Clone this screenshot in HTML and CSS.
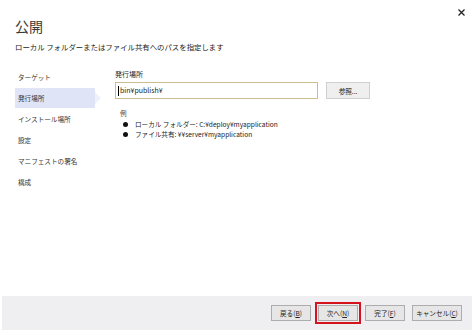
FILE: index.html
```html
<!DOCTYPE html>
<html lang="ja">
<head>
    <meta charset="UTF-8">
    <meta name="viewport" content="width=device-width, initial-scale=1.0">
    <title>公開</title>
    <link rel="stylesheet" href="styles.css">
</head>
<body>
    <div class="dialog">
        <span class="close">
            <svg width="7" height="7" viewBox="0 0 7 7"><path d="M0.5 0.5L6.5 6.5M6.5 0.5L0.5 6.5" stroke="#222" stroke-width="1.3"/></svg>
        </span>
        <div class="header">
            <h1 class="title">公開</h1>
            <p class="subtitle">ローカル フォルダーまたはファイル共有へのパスを指定します</p>
        </div>
        <div class="main">
            <ul class="nav">
                <li>ターゲット</li>
                <li class="active">発行場所</li>
                <li>インストール場所</li>
                <li>設定</li>
                <li>マニフェストの署名</li>
                <li>構成</li>
            </ul>
            <div class="content">
                <div class="label">発行場所</div>
                <div class="path-row">
                    <div class="path-input"><span class="caret"></span>bin¥publish¥</div>
                    <button class="btn browse">参照...</button>
                </div>
                <div class="examples">
                    <div class="ex-title">例</div>
                    <ul class="ex-list">
                        <li>ローカル フォルダー: C:¥deploy¥myapplication</li>
                        <li>ファイル共有: ¥¥server¥myapplication</li>
                    </ul>
                </div>
            </div>
        </div>
        <div class="footer">
            <button class="btn">戻る(<u>B</u>)</button>
            <span class="highlight"><button class="btn">次へ(<u>N</u>)</button></span>
            <button class="btn">完了(<u>F</u>)</button>
            <button class="btn wide">キャンセル(<u>C</u>)</button>
        </div>
    </div>
</body>
</html>
```

FILE: styles.css
```css
body {
    margin: 0;
    background-color: white;
    font-family: "Noto Sans CJK JP", "Noto Sans", sans-serif;
    color: #222;
}
.dialog {
    position: relative;
    width: 474px;
    height: 332px;
    display: flex;
    flex-direction: column;
    overflow: hidden;
}
.close {
    position: absolute;
    top: 9px;
    right: 9px;
    line-height: 0;
}
.header {
    padding: 16px 0 0 15px;
    height: 51px;
}
.title {
    margin: 0;
    font-size: 14px;
    font-weight: normal;
    line-height: 20px;
    color: #3a3a3a;
}
.subtitle {
    margin: 5px 0 0;
    font-size: 7.4px;
    line-height: 12px;
    color: #222;
}
.main {
    display: flex;
    flex: 1;
}
.nav {
    list-style: none;
    margin: 0;
    padding: 0 0 0 15px;
    width: 100px;
}
.nav li {
    position: relative;
    width: 80px;
    height: 21px;
    line-height: 21px;
    padding-left: 3px;
    box-sizing: border-box;
    font-size: 6.6px;
    color: #333;
}
.nav li.active {
    background-color: #dfe4f6;
    height: 20px;
    line-height: 20px;
    margin-bottom: 1px;
}
.nav li.active::after {
    content: "";
    position: absolute;
    right: -6px;
    top: 4px;
    border-left: 6px solid #eef1fa;
    border-top: 6px solid transparent;
    border-bottom: 6px solid transparent;
}
.content {
    flex: 1;
    padding-top: 1px;
}
.label {
    font-size: 7px;
    line-height: 12px;
    margin-bottom: 2px;
}
.path-row {
    display: flex;
    gap: 8px;
}
.path-input {
    width: 203px;
    height: 17px;
    box-sizing: border-box;
    border: 1px solid #cdbd8e;
    font-size: 7px;
    line-height: 15px;
    padding-left: 2px;
    display: flex;
    align-items: center;
}
.caret {
    width: 1px;
    height: 10px;
    background-color: #000;
    margin-right: 1px;
}
.btn {
    font-family: "Noto Sans CJK JP", "Noto Sans", sans-serif;
    font-size: 6.6px;
    color: #222;
    background-color: #e6e6e6;
    border: 1px solid #adadad;
    width: 40px;
    height: 16px;
    padding: 0;
    margin: 0;
    line-height: 14px;
}
.btn u {
    text-decoration: underline;
}
.browse {
    width: 44px;
    height: 17px;
    background-color: #efefef;
    border-color: #cfcfcf;
}
.examples {
    padding: 9px 0 0 5px;
}
.ex-title {
    font-size: 6.6px;
    line-height: 10px;
    color: #444;
}
.ex-list {
    list-style: none;
    margin: 1px 0 0;
    padding: 0 0 0 3px;
}
.ex-list li {
    display: flex;
    align-items: center;
    font-size: 6.6px;
    line-height: 10px;
}
.ex-list li::before {
    content: "";
    width: 5px;
    height: 5px;
    border-radius: 50%;
    background-color: #111;
    margin-right: 7px;
}
.footer {
    margin: 0 2px 2px;
    height: 34px;
    background-color: #efeff2;
    display: flex;
    align-items: center;
    justify-content: flex-end;
    gap: 7px;
    padding-right: 10px;
}
.highlight {
    border: 2px solid #d4131d;
    padding: 1px;
    margin: 0 -3px;
    line-height: 0;
}
.wide {
    width: 50px;
}
```
